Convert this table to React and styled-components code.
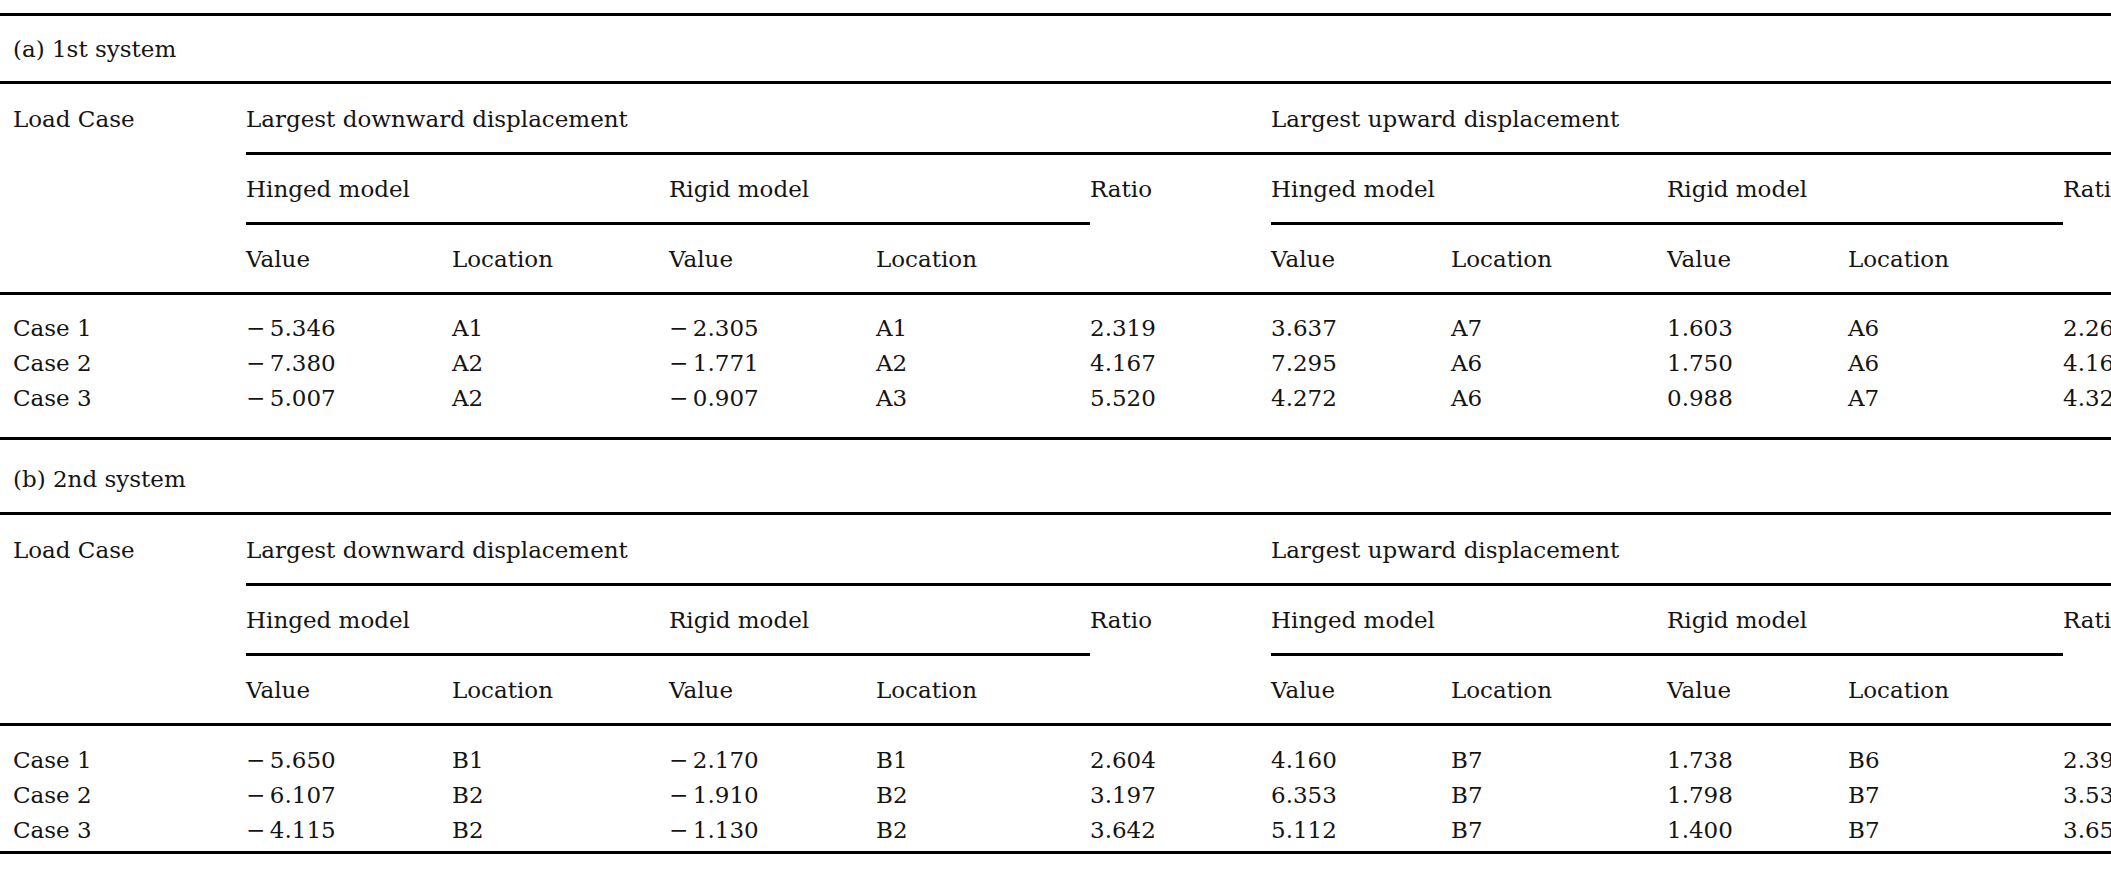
import React from 'react';
import styled, { createGlobalStyle } from 'styled-components';

const GlobalStyle = createGlobalStyle`
  html, body {
    margin: 0;
    padding: 0;
    background: #ffffff;
    overflow: hidden;
  }
  body {
    font-family: "DejaVu Serif", "Liberation Serif", serif;
    color: #141414;
  }
`;

const COLS = [246, 206, 217, 207, 214, 181, 180, 216, 181, 215, 180];
const RULE = '3px solid #000';

const sections = [
  {
    title: '(a) 1st system',
    captionPad: [19, 18],
    headPad: 16,
    tailPad: 21,
    rows: [
      ['Case 1', '−\u20095.346', 'A1', '−\u20092.305', 'A1', '2.319', '3.637', 'A7', '1.603', 'A6', '2.269'],
      ['Case 2', '−\u20097.380', 'A2', '−\u20091.771', 'A2', '4.167', '7.295', 'A6', '1.750', 'A6', '4.169'],
      ['Case 3', '−\u20095.007', 'A2', '−\u20090.907', 'A3', '5.520', '4.272', 'A6', '0.988', 'A7', '4.324'],
    ],
  },
  {
    title: '(b) 2nd system',
    captionPad: [25, 19],
    headPad: 17,
    tailPad: 3,
    rows: [
      ['Case 1', '−\u20095.650', 'B1', '−\u20092.170', 'B1', '2.604', '4.160', 'B7', '1.738', 'B6', '2.394'],
      ['Case 2', '−\u20096.107', 'B2', '−\u20091.910', 'B2', '3.197', '6.353', 'B7', '1.798', 'B7', '3.533'],
      ['Case 3', '−\u20094.115', 'B2', '−\u20091.130', 'B2', '3.642', '5.112', 'B7', '1.400', 'B7', '3.651'],
    ],
  },
];

const Page = styled.div`
  width: 2111px;
  height: 890px;
  overflow: hidden;
  padding-top: 13px;
  box-sizing: border-box;
`;

const Table = styled.table`
  border-collapse: collapse;
  table-layout: fixed;
  width: 2243px;
  font-size: 23px;
  line-height: 28px;
  border-top: ${RULE};
`;

const CaptionCell = styled.td`
  padding: ${p => p.$pad[0]}px 0 ${p => p.$pad[1]}px 13px;
  border-bottom: ${RULE};
  text-align: left;
  white-space: nowrap;
`;

const HeadCell = styled.th`
  font-weight: normal;
  text-align: left;
  vertical-align: top;
  white-space: nowrap;
  padding: ${p => (p.$tall ? 21 : 20)}px 0 19px ${p => (p.$lead ? 13 : 0)}px;
  border-bottom: ${p => (p.$rule ? RULE : 'none')};
`;

const DataCell = styled.td`
  text-align: left;
  white-space: nowrap;
  line-height: 35px;
  padding: ${p => p.$top}px 0 ${p => p.$bottom}px ${p => (p.$lead ? 13 : 0)}px;
  border-bottom: ${p => (p.$rule ? RULE : 'none')};
`;

const Header = () => (
  <>
    <tr>
      <HeadCell rowSpan={3} $lead $tall $rule>Load Case</HeadCell>
      <HeadCell colSpan={5} $tall $rule>Largest downward displacement</HeadCell>
      <HeadCell colSpan={5} $tall $rule>Largest upward displacement</HeadCell>
    </tr>
    <tr>
      <HeadCell colSpan={2} $rule>Hinged model</HeadCell>
      <HeadCell colSpan={2} $rule>Rigid model</HeadCell>
      <HeadCell rowSpan={2} $rule>Ratio</HeadCell>
      <HeadCell colSpan={2} $rule>Hinged model</HeadCell>
      <HeadCell colSpan={2} $rule>Rigid model</HeadCell>
      <HeadCell rowSpan={2} $rule>Ratio</HeadCell>
    </tr>
    <tr>
      {['Value', 'Location', 'Value', 'Location'].map((t, i) => (
        <HeadCell key={'d' + i} $rule>{t}</HeadCell>
      ))}
      {['Value', 'Location', 'Value', 'Location'].map((t, i) => (
        <HeadCell key={'u' + i} $rule>{t}</HeadCell>
      ))}
    </tr>
  </>
);

const Section = ({ title, captionPad, headPad, tailPad, rows }) => (
  <tbody>
    <tr>
      <CaptionCell colSpan={11} $pad={captionPad}>{title}</CaptionCell>
    </tr>
    <Header />
    {rows.map((row, r) => (
      <tr key={r}>
        {row.map((cell, c) => (
          <DataCell
            key={c}
            $lead={c === 0}
            $top={r === 0 ? headPad : 0}
            $bottom={r === rows.length - 1 ? tailPad : 0}
            $rule={r === rows.length - 1}
          >
            {cell}
          </DataCell>
        ))}
      </tr>
    ))}
  </tbody>
);

export default function App() {
  return (
    <>
      <GlobalStyle />
      <Page>
        <Table>
          <colgroup>
            {COLS.map((w, i) => (
              <col key={i} style={{ width: w }} />
            ))}
          </colgroup>
          {sections.map(s => (
            <Section key={s.title} {...s} />
          ))}
        </Table>
      </Page>
    </>
  );
}
